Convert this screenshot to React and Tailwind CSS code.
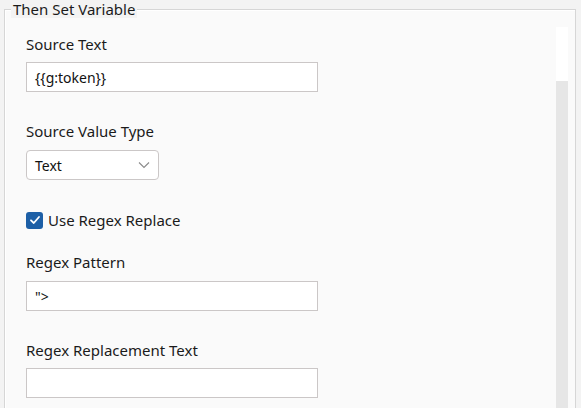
import React from "react";

const font = { fontFamily: '"Noto Sans", "Open Sans", sans-serif' };

function Label({ children, className = "" }) {
  return (
    <div className={"h-[20px] leading-[20px] text-[15px] text-[#1b1b1b] " + className}>
      {children}
    </div>
  );
}

function TextBox({ value, className = "" }) {
  return (
    <div
      className={
        "w-[292px] h-[30px] bg-white border border-[#cbc7c7] flex items-center px-[8px] text-[14px] text-[#111] " +
        className
      }
    >
      {value}
    </div>
  );
}

export default function App() {
  return (
    <div
      className="w-[581px] h-[408px] bg-[#f3f3f3] overflow-hidden pl-[4px] pr-[5px]"
      style={font}
    >
      <fieldset className="h-[440px] border border-[#d6d6d6] bg-[#fafafa] shadow-[inset_1px_1px_0_#ffffff] flex">
        <legend className="ml-[6px] px-[2px] text-[15px] leading-[18px] text-[#1b1b1b] bg-[#f3f3f3]">
          Then Set Variable
        </legend>
        <div className="flex-1 pl-[21px] pt-[16px] flex flex-col">
          <Label>Source Text</Label>
          <TextBox value="{{g:token}}" className="mt-[8px]" />
          <Label className="mt-[29px]">Source Value Type</Label>
          <div className="mt-[9px] w-[133px] h-[30px] bg-white border border-[#cbc7c7] rounded-[4px] flex items-center justify-between pl-[8px] pr-[8px] text-[14px] text-[#111]">
            <span>Text</span>
            <svg width="12" height="8" viewBox="0 0 12 8" fill="none">
              <path d="M1 1.5 L6 6.5 L11 1.5" stroke="#8a8a8a" strokeWidth="1.1" />
            </svg>
          </div>
          <div className="mt-[30px] h-[20px] flex items-center">
            <div className="w-[17px] h-[17px] rounded-[3px] bg-[#1d5fa6] flex items-center justify-center">
              <svg width="12" height="12" viewBox="0 0 12 12" fill="none">
                <path d="M2 6.3 L4.8 9 L10 3" stroke="#ffffff" strokeWidth="1.8" strokeLinecap="round" strokeLinejoin="round" />
              </svg>
            </div>
            <span className="ml-[5px] text-[15px] text-[#1b1b1b]">Use Regex Replace</span>
          </div>
          <Label className="mt-[22px]">Regex Pattern</Label>
          <TextBox value={'">'} className="mt-[9px]" />
          <Label className="mt-[29px]">Regex Replacement Text</Label>
          <TextBox value="" className="mt-[8px]" />
        </div>
        <div className="w-[12px] mr-[7px] mt-[9px] flex flex-col">
          <div className="h-[54px] bg-white" />
          <div className="flex-1 bg-[#e6e6e6]" />
        </div>
      </fieldset>
    </div>
  );
}
